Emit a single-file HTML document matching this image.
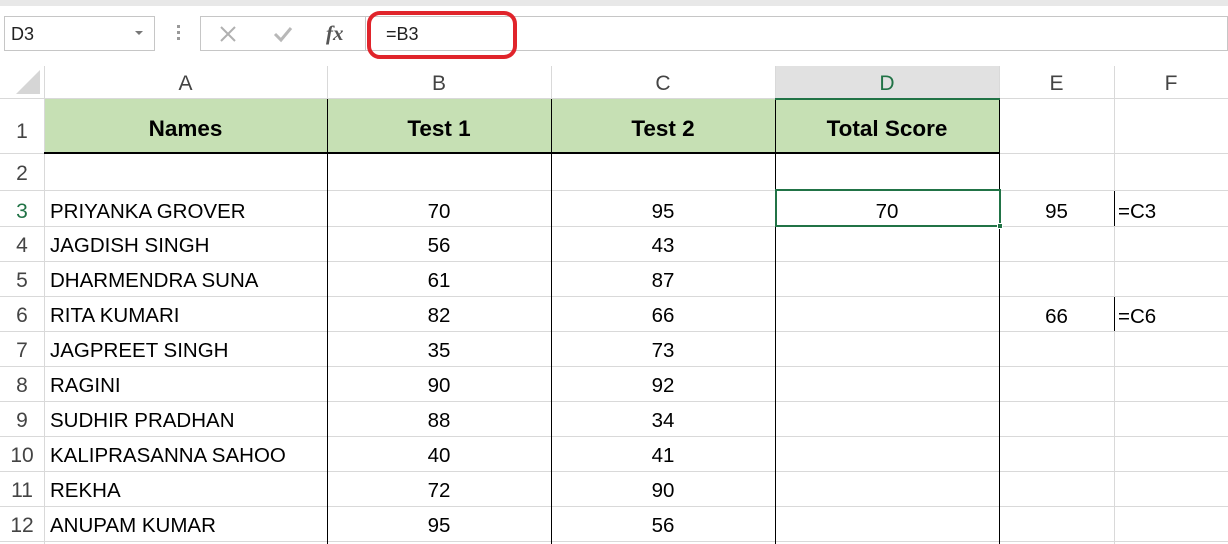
<!DOCTYPE html>
<html><head><meta charset="utf-8"><style>
*{margin:0;padding:0;box-sizing:border-box}
body{width:1228px;height:544px;overflow:hidden;background:#fff;position:relative;font-family:"Liberation Sans",sans-serif;color:#000}
.a{position:absolute}
.h{position:absolute;height:1px;background:#d9d9d9}
.v{position:absolute;width:1px;background:#d9d9d9}
.t{position:absolute;font-size:20.5px;line-height:35px;white-space:nowrap;margin-top:2px}
.c{text-align:center}
.rh{position:absolute;left:0;width:44px;text-align:center;font-size:21px;color:#444;line-height:35px;margin-top:2px}
.ch{position:absolute;top:66px;height:33px;line-height:35px;text-align:center;font-size:21px;color:#444}
</style></head><body>
<div class="a" style="left:0;top:0;width:1228px;height:6px;background:#e8e8e8"></div>
<div class="a" style="left:4px;top:16px;width:151px;height:35px;border:1px solid #c6c6c6;font-size:18px;line-height:35px;padding-left:6px;color:#222">D3</div>
<div class="a" style="left:135px;top:31px;width:0;height:0;border-left:4px solid transparent;border-right:4px solid transparent;border-top:4px solid #777"></div>
<div class="a" style="left:177px;top:25px;width:3px;height:3px;background:#999"></div>
<div class="a" style="left:177px;top:31px;width:3px;height:3px;background:#999"></div>
<div class="a" style="left:177px;top:37px;width:3px;height:3px;background:#999"></div>
<div class="a" style="left:200px;top:16px;width:166px;height:35px;border:1px solid #c6c6c6"></div>
<svg class="a" style="left:218px;top:24px" width="20" height="20"><path d="M3 3L17 17M17 3L3 17" stroke="#b0b0b0" stroke-width="2"/></svg>
<svg class="a" style="left:272px;top:24px" width="22" height="20"><path d="M3 10L9 16L19 4" stroke="#b8b8b8" stroke-width="3" fill="none"/></svg>
<div class="a" style="left:326px;top:18px;font-family:'Liberation Serif',serif;font-style:italic;font-weight:bold;font-size:21px;color:#555;line-height:30px">fx</div>
<div class="a" style="left:366px;top:16px;width:862px;height:35px;border:1px solid #c6c6c6;border-left:none"></div>
<div class="a" style="left:386px;top:17px;font-size:18px;line-height:35px;color:#222">=B3</div>
<div class="a" style="left:367px;top:11px;width:150px;height:48px;border:4px solid #e0242b;border-radius:13px"></div>
<div class="a" style="left:775px;top:66px;width:224px;height:33px;background:#e1e1e1"></div>
<svg class="a" style="left:14px;top:68px" width="28" height="28"><path d="M26 2V26H2Z" fill="#d6d6d6"/></svg>
<div class="ch" style="left:44px;width:283px">A</div>
<div class="ch" style="left:327px;width:224px">B</div>
<div class="ch" style="left:551px;width:224px">C</div>
<div class="ch" style="left:775px;width:224px;color:#217346">D</div>
<div class="ch" style="left:999px;width:115px">E</div>
<div class="ch" style="left:1114px;width:114px">F</div>
<div class="a" style="left:44px;top:99px;width:955px;height:54px;background:#c6e0b4"></div>
<div class="h" style="left:0;top:98px;width:1228px"></div>
<div class="h" style="left:0;top:153px;width:1228px"></div>
<div class="h" style="left:0;top:190px;width:1228px"></div>
<div class="h" style="left:0;top:226px;width:1228px"></div>
<div class="h" style="left:0;top:261px;width:1228px"></div>
<div class="h" style="left:0;top:296px;width:1228px"></div>
<div class="h" style="left:0;top:331px;width:1228px"></div>
<div class="h" style="left:0;top:366px;width:1228px"></div>
<div class="h" style="left:0;top:401px;width:1228px"></div>
<div class="h" style="left:0;top:436px;width:1228px"></div>
<div class="h" style="left:0;top:471px;width:1228px"></div>
<div class="h" style="left:0;top:506px;width:1228px"></div>
<div class="h" style="left:0;top:541px;width:1228px"></div>
<div class="v" style="left:44px;top:66px;height:478px"></div>
<div class="v" style="left:327px;top:66px;height:33px"></div>
<div class="v" style="left:551px;top:66px;height:33px"></div>
<div class="v" style="left:775px;top:66px;height:33px"></div>
<div class="v" style="left:999px;top:66px;height:33px"></div>
<div class="v" style="left:1114px;top:66px;height:478px"></div>
<div class="a" style="left:327px;top:99px;width:1px;height:445px;background:#000"></div>
<div class="a" style="left:551px;top:99px;width:1px;height:445px;background:#000"></div>
<div class="a" style="left:775px;top:99px;width:1px;height:445px;background:#000"></div>
<div class="a" style="left:999px;top:99px;width:1px;height:445px;background:#000"></div>
<div class="a" style="left:44px;top:152px;width:956px;height:2px;background:#000"></div>
<div class="a" style="left:1114px;top:191px;width:1px;height:35px;background:#000"></div>
<div class="a" style="left:1114px;top:297px;width:1px;height:34px;background:#000"></div>
<div class="a" style="left:775px;top:98px;width:225px;height:2px;background:#217346"></div>
<div class="a" style="left:775px;top:189px;width:226px;height:38px;border:2px solid #217346"></div>
<div class="a" style="left:997px;top:223px;width:6px;height:6px;background:#217346;border:1px solid #fff"></div>
<div class="rh" style="top:99px;line-height:62px">1</div>
<div class="rh" style="top:153px;line-height:37px">2</div>
<div class="rh" style="top:192px;color:#217346">3</div>
<div class="rh" style="top:226px">4</div>
<div class="rh" style="top:261px">5</div>
<div class="rh" style="top:296px">6</div>
<div class="rh" style="top:331px">7</div>
<div class="rh" style="top:366px">8</div>
<div class="rh" style="top:401px">9</div>
<div class="rh" style="top:436px">10</div>
<div class="rh" style="top:471px">11</div>
<div class="rh" style="top:506px">12</div>
<div class="t c" style="left:44px;top:99px;width:283px;line-height:56px;font-weight:bold;font-size:22.5px">Names</div>
<div class="t c" style="left:327px;top:99px;width:224px;line-height:56px;font-weight:bold;font-size:22.5px">Test 1</div>
<div class="t c" style="left:551px;top:99px;width:224px;line-height:56px;font-weight:bold;font-size:22.5px">Test 2</div>
<div class="t c" style="left:775px;top:99px;width:224px;line-height:56px;font-weight:bold;font-size:22.5px">Total Score</div>
<div class="t" style="left:50px;top:192px">PRIYANKA GROVER</div><div class="t c" style="left:327px;top:192px;width:224px">70</div><div class="t c" style="left:551px;top:192px;width:224px">95</div>
<div class="t" style="left:50px;top:226px">JAGDISH SINGH</div><div class="t c" style="left:327px;top:226px;width:224px">56</div><div class="t c" style="left:551px;top:226px;width:224px">43</div>
<div class="t" style="left:50px;top:261px">DHARMENDRA SUNA</div><div class="t c" style="left:327px;top:261px;width:224px">61</div><div class="t c" style="left:551px;top:261px;width:224px">87</div>
<div class="t" style="left:50px;top:296px">RITA KUMARI</div><div class="t c" style="left:327px;top:296px;width:224px">82</div><div class="t c" style="left:551px;top:296px;width:224px">66</div>
<div class="t" style="left:50px;top:331px">JAGPREET SINGH</div><div class="t c" style="left:327px;top:331px;width:224px">35</div><div class="t c" style="left:551px;top:331px;width:224px">73</div>
<div class="t" style="left:50px;top:366px">RAGINI</div><div class="t c" style="left:327px;top:366px;width:224px">90</div><div class="t c" style="left:551px;top:366px;width:224px">92</div>
<div class="t" style="left:50px;top:401px">SUDHIR PRADHAN</div><div class="t c" style="left:327px;top:401px;width:224px">88</div><div class="t c" style="left:551px;top:401px;width:224px">34</div>
<div class="t" style="left:50px;top:436px">KALIPRASANNA SAHOO</div><div class="t c" style="left:327px;top:436px;width:224px">40</div><div class="t c" style="left:551px;top:436px;width:224px">41</div>
<div class="t" style="left:50px;top:471px">REKHA</div><div class="t c" style="left:327px;top:471px;width:224px">72</div><div class="t c" style="left:551px;top:471px;width:224px">90</div>
<div class="t" style="left:50px;top:506px">ANUPAM KUMAR</div><div class="t c" style="left:327px;top:506px;width:224px">95</div><div class="t c" style="left:551px;top:506px;width:224px">56</div>
<div class="t c" style="left:775px;top:192px;width:224px">70</div>
<div class="t c" style="left:999px;top:192px;width:115px">95</div>
<div class="t" style="left:1118px;top:192px">=C3</div>
<div class="t c" style="left:999px;top:297px;width:115px">66</div>
<div class="t" style="left:1118px;top:297px">=C6</div>
</body></html>
